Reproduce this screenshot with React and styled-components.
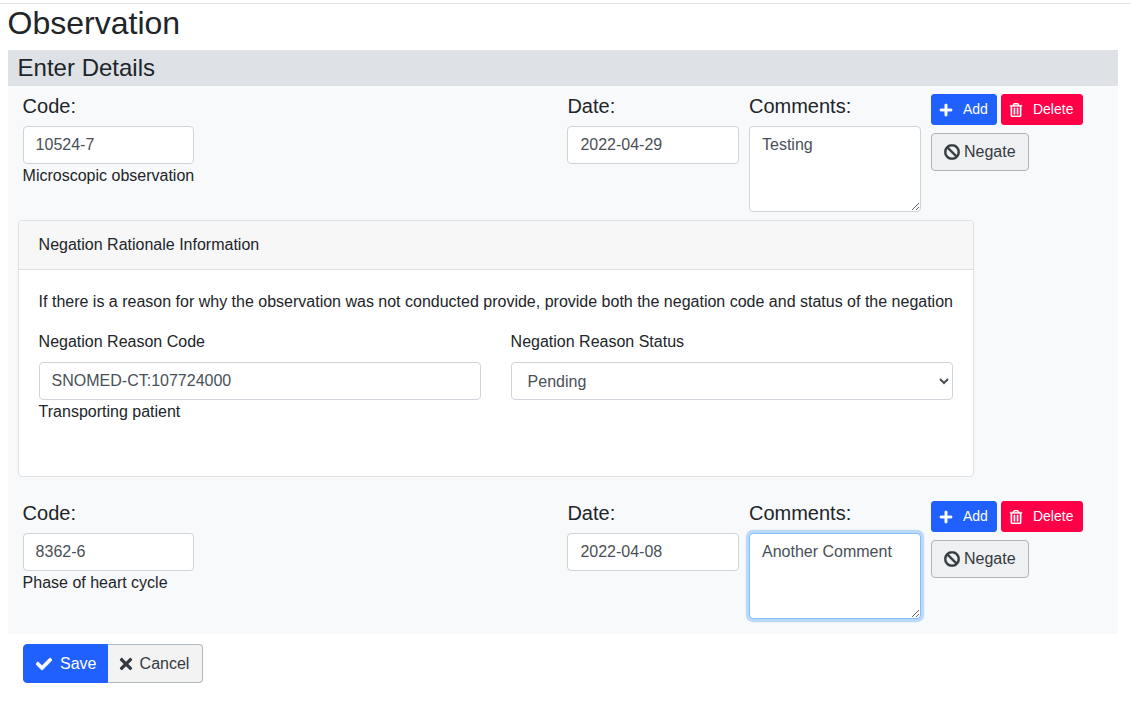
import React from "react";
import styled, { createGlobalStyle } from "styled-components";
import { FaPlus, FaRegTrashAlt, FaBan, FaCheck, FaTimes } from "react-icons/fa";

const Global = createGlobalStyle`
  * { box-sizing: border-box; }
  html, body { margin: 0; padding: 0; background: #fff; }
  body { font-family: "Liberation Sans", Arial, sans-serif; font-size: 16px; line-height: 1.5; color: #212529; }
  button svg { flex: none; }
`;

const Page = styled.div`
  width: 1131px;
  height: 702px;
  padding: 3px 13px 0 7.6px;
  overflow: hidden;
  position: relative;
  &::before {
    content: "";
    position: absolute;
    left: 0; right: 0; top: 3px;
    height: 1px;
    background: #e2e3e4;
  }
`;
const Title = styled.h2`
  margin: 0;
  padding-top: 1px;
  font-size: 32px;
  font-weight: 400;
  line-height: 38px;
  height: 47px;
`;
const Section = styled.section`
  background: #f8f9fa;
  height: 584px;
`;
const SectionHead = styled.h4`
  margin: 0;
  background: #dee2e6;
  height: 36px;
  padding: 3px 10px 0;
  font-size: 24px;
  font-weight: 400;
  line-height: 29px;
`;
const Row = styled.div`
  display: grid;
  grid-template-columns: 544.8px 181.6px 182px auto;
  padding: 5px 0 0 15px;
  margin-top: ${p => p.$top || 0}px;
`;
const Field = styled.div`
  display: flex;
  flex-direction: column;
  align-items: flex-start;
`;
const BigLabel = styled.label`
  font-size: 20px;
  line-height: 30px;
  margin-bottom: 5px;
`;
const ShortInput = styled.input`
  width: ${p => p.$w}px;
  height: 38px;
  padding: 6px 12px;
  font: 16px/24px "Liberation Sans", Arial, sans-serif;
  color: #495057;
  background: #fff;
  border: 1px solid #ced4da;
  border-radius: 4px;
  outline: none;
`;
const Note = styled.div`
  line-height: 24px;
`;
const Comment = styled.textarea`
  display: block;
  width: 172px;
  height: 86px;
  padding: 6px 12px;
  font: 16px/24px "Liberation Sans", Arial, sans-serif;
  color: #495057;
  background: #fff;
  border: 1px solid ${p => (p.$focus ? "#80bdff" : "#ced4da")};
  border-radius: 4px;
  outline: none;
  box-shadow: ${p => (p.$focus ? "0 0 0 3.2px rgba(0,123,255,.25)" : "none")};
`;
const Actions = styled.div`
  display: flex;
  flex-wrap: wrap;
  align-content: flex-start;
  column-gap: 4px;
  row-gap: 8px;
  padding-top: 3px;
  width: 160px;
`;
const SmallBtn = styled.button`
  display: inline-flex;
  align-items: center;
  width: ${p => p.$w}px;
  height: 31px;
  padding: 0 0 0 7.4px;
  border: 1px solid ${p => p.$bg};
  border-radius: 3px;
  background: ${p => p.$bg};
  color: #fff;
  font: 14px/21px "Liberation Sans", Arial, sans-serif;
  svg { font-size: 14px; margin-right: 9.6px; stroke-width: 12; }
`;
const GreyBtn = styled.button`
  display: inline-flex;
  align-items: center;
  height: 38px;
  padding: 0 12px;
  background: #eff0f1;
  border: 1px solid #adb5bd;
  border-radius: 4px;
  color: #343a40;
  font: 16px/24px "Liberation Sans", Arial, sans-serif;
  svg { font-size: 16px; margin-right: 4px; stroke-width: 14; }
`;
const Card = styled.div`
  width: 956px;
  height: 257px;
  margin: 8px 0 0 10px;
  background: #fff;
  border: 1px solid #dfe0e1;
  border-radius: 4px;
  overflow: hidden;
`;
const CardHead = styled.div`
  height: 49px;
  padding: 12px 20px;
  background: #f7f7f7;
  border-bottom: 1px solid #dfe0e1;
  line-height: 24px;
`;
const CardBody = styled.div`
  padding: 20px;
`;
const Lead = styled.p`
  margin: 0 0 16px;
  line-height: 24px;
  white-space: nowrap;
`;
const Columns = styled.div`
  display: grid;
  grid-template-columns: 442px 442px;
  column-gap: 30px;
`;
const PlainLabel = styled.label`
  display: block;
  line-height: 24px;
  margin-bottom: 8px;
`;
const Picker = styled.select`
  display: block;
  width: 442px;
  height: 38px;
  padding: 6px 12px;
  font: 16px/24px "Liberation Sans", Arial, sans-serif;
  color: #495057;
  background: #fff;
  border: 1px solid #ced4da;
  border-radius: 4px;
  outline: none;
`;
const Footer = styled.div`
  display: flex;
  padding: 10px 0 0 15px;
`;
const SaveBtn = styled.button`
  display: inline-flex;
  align-items: center;
  height: 39px;
  width: 85.4px;
  padding: 0 0 0 12px;
  background: #2060ff;
  border: 1px solid #2060ff;
  border-radius: 4px 0 0 4px;
  color: #fff;
  font: 16px/24px "Liberation Sans", Arial, sans-serif;
  svg { font-size: 16px; margin-right: 8.4px; stroke-width: 24; }
`;
const CancelBtn = styled.button`
  display: inline-flex;
  align-items: center;
  height: 39px;
  width: 95px;
  padding: 0 0 0 9.1px;
  background: #f3f3f4;
  border: 1px solid #adb5bd;
  border-left-width: 0;
  border-radius: 0 4px 4px 0;
  color: #343a40;
  font: 16px/24px "Liberation Sans", Arial, sans-serif;
  svg { font-size: 18px; margin-right: 4.5px; }
`;

function Entry({ code, name, date, comment, focus, top }) {
  return (
    <Row $top={top}>
      <Field>
        <BigLabel>Code:</BigLabel>
        <ShortInput $w={171} defaultValue={code} />
        <Note>{name}</Note>
      </Field>
      <Field>
        <BigLabel>Date:</BigLabel>
        <ShortInput $w={172} defaultValue={date} />
      </Field>
      <Field>
        <BigLabel>Comments:</BigLabel>
        <Comment $focus={focus} defaultValue={comment} />
      </Field>
      <Actions>
        <SmallBtn $bg="#2060ff" $w={66}><FaPlus />Add</SmallBtn>
        <SmallBtn $bg="#ff0048" $w={82}><FaRegTrashAlt />Delete</SmallBtn>
        <GreyBtn><FaBan />Negate</GreyBtn>
      </Actions>
    </Row>
  );
}

export default function App() {
  return (
    <Page>
      <Global />
      <Title>Observation</Title>
      <Section>
        <SectionHead>Enter Details</SectionHead>
        <Entry code="10524-7" name="Microscopic observation" date="2022-04-29" comment="Testing" />
        <Card>
          <CardHead>Negation Rationale Information</CardHead>
          <CardBody>
            <Lead>If there is a reason for why the observation was not conducted provide, provide both the negation code and status of the negation</Lead>
            <Columns>
              <div>
                <PlainLabel>Negation Reason Code</PlainLabel>
                <ShortInput $w={442} defaultValue="SNOMED-CT:107724000" />
                <Note>Transporting patient</Note>
              </div>
              <div>
                <PlainLabel>Negation Reason Status</PlainLabel>
                <Picker defaultValue="Pending">
                  <option>Pending</option>
                  <option>Final</option>
                </Picker>
              </div>
            </Columns>
          </CardBody>
        </Card>
        <Entry top={16} focus code="8362-6" name="Phase of heart cycle" date="2022-04-08" comment="Another Comment" />
      </Section>
      <Footer>
        <SaveBtn><FaCheck />Save</SaveBtn>
        <CancelBtn><FaTimes />Cancel</CancelBtn>
      </Footer>
    </Page>
  );
}
